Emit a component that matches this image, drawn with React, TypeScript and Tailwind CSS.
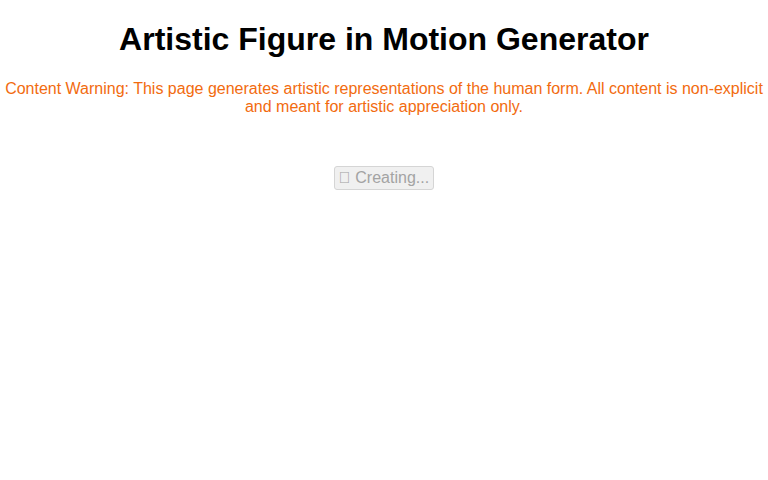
export default function App() {
  return (
    <div className="min-h-screen bg-white text-center px-[5px]" style={{ fontFamily: '"Liberation Sans", Arial, sans-serif' }}>
      <h1 className="pt-[21px] text-[32px] font-bold leading-[37px] text-black">Artistic Figure in Motion Generator</h1>
      <p className="mt-[22px] text-[16px] leading-[18px] text-[#f26b0f]">
        Content Warning: This page generates artistic representations of the human form. All content is non-explicit and meant for artistic appreciation only.
      </p>
      <div className="mt-[50px] flex justify-center">
        <button
          disabled
          className="h-[24px] px-[4px] border border-[#d5d5d5] rounded-[3px] bg-[#f0f0f0] text-[16px] leading-[18px] text-[#a3a3a3]"
        >
          {"\uf110"} Creating...
        </button>
      </div>
    </div>
  );
}
